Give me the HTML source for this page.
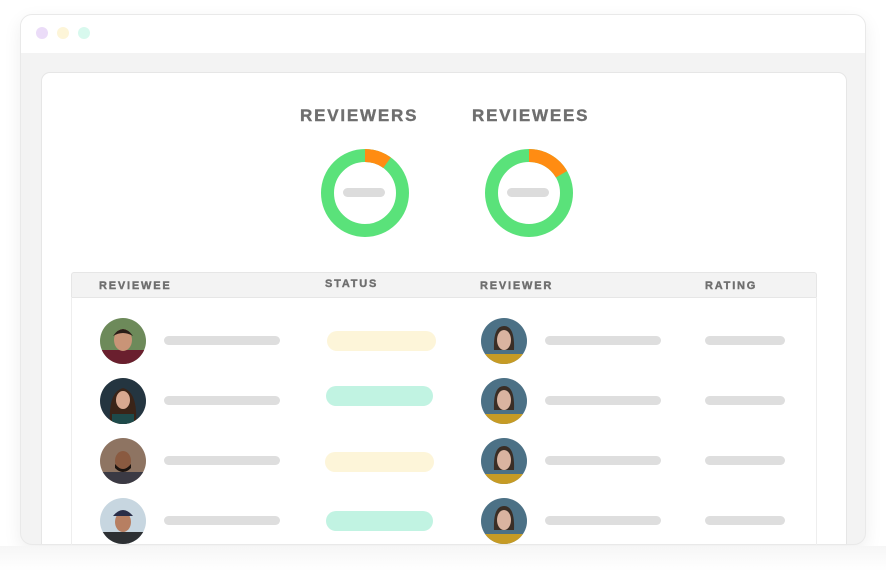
<!DOCTYPE html>
<html><head><style>
*{margin:0;padding:0;box-sizing:border-box}
body{width:886px;height:571px;background:#fff;position:relative;overflow:hidden;font-family:"Liberation Sans",sans-serif}
.win{position:absolute;left:20px;top:14px;width:846px;height:531px;border-radius:12px;background:#f3f3f3;border:1px solid #e9e9e9;box-shadow:0 6px 18px rgba(0,0,0,.07);overflow:hidden}
.tb{position:absolute;left:0;top:0;right:0;height:38px;background:#fff}
.dot{position:absolute;top:12px;width:12px;height:12px;border-radius:50%}
.card{position:absolute;left:20px;top:57px;width:806px;height:500px;background:#fff;border:1px solid #e6e6e6;border-radius:9px}
.h{position:absolute;font-weight:900;color:#6f6f6f;letter-spacing:1.8px;-webkit-text-stroke:0.4px #6f6f6f}
.bar{position:absolute;height:9px;border-radius:5px;background:#dedede}
.pill{position:absolute;height:20px;border-radius:10px}
.av{position:absolute;width:46px;height:46px;border-radius:50%;overflow:hidden}
</style></head><body>
<div class="win">
<div class="tb">
<div class="dot" style="left:15px;background:#ebdcf8"></div>
<div class="dot" style="left:36px;background:#fdf5d8"></div>
<div class="dot" style="left:57px;background:#d8f9ee"></div>
</div>
<div class="card"></div>
</div>
<div class="h" style="left:300px;top:106px;font-size:17px">REVIEWERS</div>
<div class="h" style="left:472px;top:106px;font-size:17px">REVIEWEES</div>
<svg style="position:absolute;left:0;top:0" width="886" height="571">
<circle cx="365" cy="193" r="37.5" fill="none" stroke="#5ae27a" stroke-width="13"/>
<path d="M365 155.5 A37.5 37.5 0 0 1 387 162.7" fill="none" stroke="#ff8c12" stroke-width="13"/>
<rect x="343" y="188" width="42" height="9" rx="4.5" fill="#dcdcdc"/>
<circle cx="529" cy="193" r="37.5" fill="none" stroke="#5ae27a" stroke-width="13"/>
<path d="M529 155.5 A37.5 37.5 0 0 1 561.5 174.2" fill="none" stroke="#ff8c12" stroke-width="13"/>
<rect x="507" y="188" width="42" height="9" rx="4.5" fill="#dcdcdc"/>
</svg>
<div style="position:absolute;left:71px;top:272px;width:746px;height:26px;background:#f3f3f3;border:1px solid #e6e6e6;border-radius:3px 3px 0 0"></div>
<div style="position:absolute;left:71px;top:297px;width:746px;height:248px;border-left:1px solid #eee;border-right:1px solid #eee"></div>
<div class="h" style="left:99px;top:280px;font-size:11px">REVIEWEE</div>
<div class="h" style="left:325px;top:278px;font-size:11px">STATUS</div>
<div class="h" style="left:480px;top:280px;font-size:11px">REVIEWER</div>
<div class="h" style="left:705px;top:280px;font-size:11px">RATING</div>

<div class="av" style="left:100px;top:318px;background:#6d8a5a"><svg width="46" height="46"><rect y="32" width="46" height="14" fill="#6a1f2e"/><ellipse cx="23" cy="22" rx="9" ry="11" fill="#c99477"/><path d="M13 18 Q23 4 33 18 Q23 12 13 18" fill="#2a1d17"/></svg></div>
<div class="av" style="left:100px;top:378px;background:#243540"><svg width="46" height="46"><path d="M10 46 Q8 14 23 10 Q38 14 36 46Z" fill="#3a2418"/><ellipse cx="23" cy="22" rx="7" ry="9" fill="#d8a890"/><rect x="12" y="36" width="22" height="10" fill="#1e4a4a"/></svg></div>
<div class="av" style="left:100px;top:438px;background:#8e7462"><svg width="46" height="46"><rect y="34" width="46" height="12" fill="#3b3a44"/><ellipse cx="23" cy="23" rx="8" ry="10" fill="#8a5a40"/><path d="M15 26 Q23 36 31 26 L31 30 Q23 38 15 30Z" fill="#1c1410"/></svg></div>
<div class="av" style="left:100px;top:498px;background:#c7d6e0"><svg width="46" height="46"><rect y="34" width="46" height="12" fill="#2d3033"/><ellipse cx="23" cy="24" rx="8" ry="10" fill="#b77f62"/><path d="M13 18 Q23 6 33 18Z" fill="#2a2e48"/></svg></div>

<div class="bar" style="left:164px;top:336px;width:116px"></div>
<div class="bar" style="left:164px;top:396px;width:116px"></div>
<div class="bar" style="left:164px;top:456px;width:116px"></div>
<div class="bar" style="left:164px;top:516px;width:116px"></div>
<div class="pill" style="left:327px;top:331px;width:109px;background:#fdf5d9"></div>
<div class="pill" style="left:326px;top:386px;width:107px;background:#c1f3e2"></div>
<div class="pill" style="left:325px;top:452px;width:109px;background:#fdf5d9"></div>
<div class="pill" style="left:326px;top:511px;width:107px;background:#c1f3e2"></div>

<div class="av" style="left:481px;top:318px;background:#4c7186"><svg width="46" height="46"><rect y="36" width="46" height="10" fill="#c69b25"/><path d="M13 32 Q12 8 23 8 Q34 8 33 32Z" fill="#3a2e26"/><ellipse cx="23" cy="22" rx="7" ry="10" fill="#d9b3a0"/></svg></div>
<div class="av" style="left:481px;top:378px;background:#4c7186"><svg width="46" height="46"><rect y="36" width="46" height="10" fill="#c69b25"/><path d="M13 32 Q12 8 23 8 Q34 8 33 32Z" fill="#3a2e26"/><ellipse cx="23" cy="22" rx="7" ry="10" fill="#d9b3a0"/></svg></div>
<div class="av" style="left:481px;top:438px;background:#4c7186"><svg width="46" height="46"><rect y="36" width="46" height="10" fill="#c69b25"/><path d="M13 32 Q12 8 23 8 Q34 8 33 32Z" fill="#3a2e26"/><ellipse cx="23" cy="22" rx="7" ry="10" fill="#d9b3a0"/></svg></div>
<div class="av" style="left:481px;top:498px;background:#4c7186"><svg width="46" height="46"><rect y="36" width="46" height="10" fill="#c69b25"/><path d="M13 32 Q12 8 23 8 Q34 8 33 32Z" fill="#3a2e26"/><ellipse cx="23" cy="22" rx="7" ry="10" fill="#d9b3a0"/></svg></div>

<div class="bar" style="left:545px;top:336px;width:116px"></div>
<div class="bar" style="left:545px;top:396px;width:116px"></div>
<div class="bar" style="left:545px;top:456px;width:116px"></div>
<div class="bar" style="left:545px;top:516px;width:116px"></div>
<div class="bar" style="left:705px;top:336px;width:80px"></div>
<div class="bar" style="left:705px;top:396px;width:80px"></div>
<div class="bar" style="left:705px;top:456px;width:80px"></div>
<div class="bar" style="left:705px;top:516px;width:80px"></div>

<div style="position:absolute;left:0;top:546px;width:886px;height:25px;background:linear-gradient(#f6f6f6,#fff)"></div>
</body></html>
